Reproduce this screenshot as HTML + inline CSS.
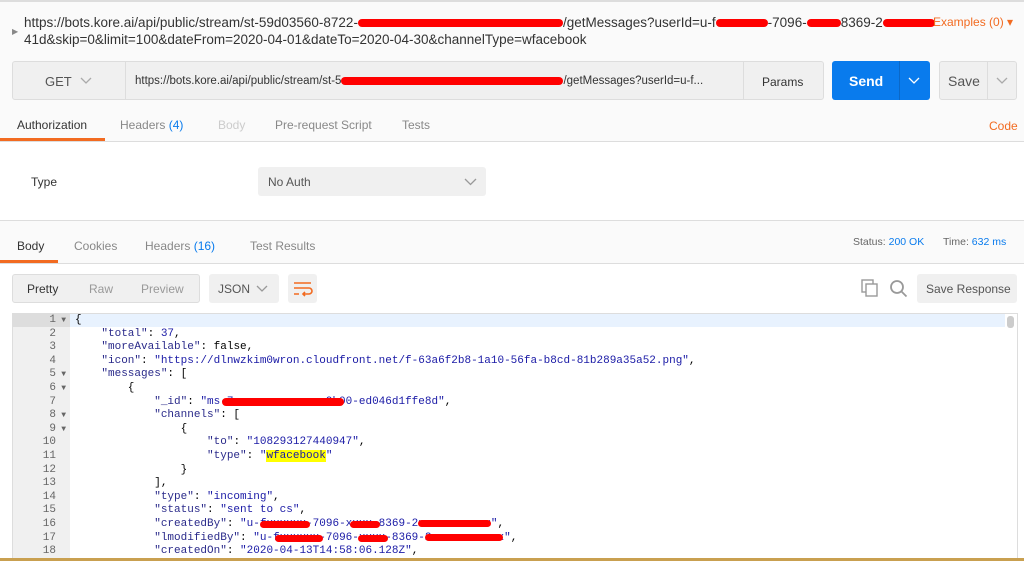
<!DOCTYPE html>
<html><head><meta charset="utf-8"><style>
*{box-sizing:border-box;margin:0;padding:0}
body{width:1024px;height:561px;overflow:hidden;background:#fff;font-family:"Liberation Sans",sans-serif;position:relative;color:#333}
.a{position:absolute}
.red{position:absolute;background:#f00;border-radius:4px;height:7px}
.r{display:inline-block;background:#f00;height:8px;border-radius:4px;vertical-align:middle}
.code{font-family:"Liberation Mono",monospace;font-size:11px;color:#000;line-height:13.6px}
.ln{position:absolute;left:12px;width:44px;text-align:right;color:#666;font-family:"Liberation Mono",monospace;font-size:11px;line-height:13.6px;height:13.6px;white-space:nowrap}
.ln i{font-style:normal;font-size:8px;position:absolute;right:-10px;top:0;color:#666}
.k{color:#2a2a8a}.s{color:#1a1aa6}
.line{position:absolute;left:75px;white-space:pre;height:13.6px}
</style></head><body>
<div class="a" style="left:0;top:0;width:1024px;height:142px;background:#fafafa"></div>
<div class="a" style="left:0;top:0;width:1024px;height:2px;background:#ddd"></div>
<div class="a" style="left:12px;top:27px;font-size:8px;color:#888">▶</div>
<div class="a" style="left:24px;top:14px;font-size:13.5px;line-height:17px;color:#333;white-space:nowrap">https://bots.kore.ai/api/public/stream/st-59d03560-8722-<span class="r" style="width:205px"></span>/getMessages?userId=u-f<span class="r" style="width:52px"></span>-7096-<span class="r" style="width:34px"></span>8369-2<span class="r" style="width:52px"></span><br>41d&amp;skip=0&amp;limit=100&amp;dateFrom=2020-04-01&amp;dateTo=2020-04-30&amp;channelType=wfacebook</div>
<div class="a" style="left:933px;top:15px;font-size:12px;color:#f26b21">Examples (0) ▾</div>
<div class="a" style="left:12px;top:61px;width:812px;height:39px;background:#f0f0f0;border:1px solid #ddd;border-radius:3px"></div>
<div class="a" style="left:125px;top:62px;width:1px;height:37px;background:#ddd"></div>
<div class="a" style="left:743px;top:62px;width:1px;height:37px;background:#ddd"></div>
<div class="a" style="left:45px;top:74px;font-size:13px;color:#555">GET</div>
<svg class="a" style="left:80px;top:77px" width="12" height="8"><path d="M1 1l5 5 5-5" stroke="#aaa" stroke-width="1.3" fill="none"/></svg>
<div class="a" style="left:135px;top:75px;font-size:11.5px;color:#333;white-space:nowrap">https://bots.kore.ai/api/public/stream/st-5<span class="r" style="width:222px"></span>/getMessages?userId=u-f...</div>
<div class="a" style="left:762px;top:75px;font-size:12px;color:#333">Params</div>
<div class="a" style="left:832px;top:61px;width:98px;height:39px;background:#097bed;border-radius:3px"></div>
<div class="a" style="left:899px;top:61px;width:1px;height:39px;background:#0a68c8"></div>
<div class="a" style="left:849px;top:73px;font-size:14px;font-weight:bold;color:#fff">Send</div>
<svg class="a" style="left:908px;top:77px" width="12" height="8"><path d="M1 1l5 5 5-5" stroke="#fff" stroke-width="1.3" fill="none"/></svg>
<div class="a" style="left:939px;top:61px;width:78px;height:39px;background:#f0f0f0;border:1px solid #ddd;border-radius:3px"></div>
<div class="a" style="left:987px;top:62px;width:1px;height:37px;background:#ddd"></div>
<div class="a" style="left:948px;top:73px;font-size:14px;color:#555">Save</div>
<svg class="a" style="left:996px;top:77px" width="12" height="8"><path d="M1 1l5 5 5-5" stroke="#aaa" stroke-width="1.3" fill="none"/></svg>
<div class="a" style="left:17px;top:118px;font-size:12px;color:#333">Authorization</div>
<div class="a" style="left:0;top:138px;width:105px;height:3px;background:#f26b21"></div>
<div class="a" style="left:120px;top:118px;font-size:12px;color:#888">Headers <span style="color:#097bed">(4)</span></div>
<div class="a" style="left:218px;top:118px;font-size:12px;color:#ccc">Body</div>
<div class="a" style="left:275px;top:118px;font-size:12px;color:#888">Pre-request Script</div>
<div class="a" style="left:402px;top:118px;font-size:12px;color:#888">Tests</div>
<div class="a" style="left:989px;top:119px;font-size:12px;color:#f26b21">Code</div>
<div class="a" style="left:0;top:141px;width:1024px;height:1px;background:#ddd"></div>
<div class="a" style="left:31px;top:175px;font-size:12px;color:#333">Type</div>
<div class="a" style="left:258px;top:167px;width:228px;height:29px;background:#f0f0f0;border-radius:3px"></div>
<div class="a" style="left:268px;top:175px;font-size:12px;color:#555">No Auth</div>
<svg class="a" style="left:464px;top:178px" width="13" height="8"><path d="M1 1l5.5 5.5 5.5-5.5" stroke="#999" stroke-width="1.3" fill="none"/></svg>
<div class="a" style="left:0;top:220px;width:1024px;height:1px;background:#ddd"></div>
<div class="a" style="left:0;top:221px;width:1024px;height:42px;background:#fafafa"></div>
<div class="a" style="left:17px;top:239px;font-size:12px;color:#333">Body</div>
<div class="a" style="left:0;top:260px;width:58px;height:3px;background:#f26b21"></div>
<div class="a" style="left:74px;top:239px;font-size:12px;color:#888">Cookies</div>
<div class="a" style="left:145px;top:239px;font-size:12px;color:#888">Headers <span style="color:#097bed">(16)</span></div>
<div class="a" style="left:250px;top:239px;font-size:12px;color:#888">Test Results</div>
<div class="a" style="left:853px;top:236px;font-size:10.5px;color:#666">Status: <span style="color:#097bed">200 OK</span></div>
<div class="a" style="left:943px;top:236px;font-size:10.5px;color:#666">Time: <span style="color:#097bed">632 ms</span></div>
<div class="a" style="left:0;top:263px;width:1024px;height:1px;background:#ddd"></div>
<div class="a" style="left:12px;top:274px;width:188px;height:29px;background:#f0f0f0;border:1px solid #ddd;border-radius:3px"></div>
<div class="a" style="left:27px;top:282px;font-size:12px;color:#333">Pretty</div>
<div class="a" style="left:89px;top:282px;font-size:12px;color:#999">Raw</div>
<div class="a" style="left:141px;top:282px;font-size:12px;color:#999">Preview</div>
<div class="a" style="left:209px;top:274px;width:70px;height:29px;background:#f0f0f0;border-radius:3px"></div>
<div class="a" style="left:218px;top:282px;font-size:12px;color:#555">JSON</div>
<svg class="a" style="left:256px;top:285px" width="12" height="8"><path d="M1 1l5 5 5-5" stroke="#999" stroke-width="1.3" fill="none"/></svg>
<div class="a" style="left:288px;top:274px;width:29px;height:29px;background:#f0f0f0;border-radius:3px"></div>
<svg class="a" style="left:293px;top:280px" width="20" height="17" viewBox="0 0 20 17"><g stroke="#f26b21" stroke-width="1.6" fill="none"><path d="M1 3h17M1 8h15a3 3 0 0 1 0 6h-6M12 12l-2 2 2 2M1 14h5"/></g></svg>
<svg class="a" style="left:861px;top:279px" width="18" height="18"><g stroke="#999" stroke-width="1.4" fill="none"><rect x="1" y="1" width="11" height="12"/><rect x="5" y="5" width="11" height="12" fill="#fff"/></g></svg>
<svg class="a" style="left:889px;top:279px" width="19" height="19"><g stroke="#999" stroke-width="1.8" fill="none"><circle cx="8" cy="8" r="6"/><path d="M12.5 12.5l5 5"/></g></svg>
<div class="a" style="left:917px;top:274px;width:100px;height:29px;background:#f0f0f0;border-radius:3px"></div>
<div class="a" style="left:926px;top:282px;font-size:12px;color:#555">Save Response</div>
<div class="a" style="left:12px;top:313px;width:1006px;height:248px;border:1px solid #ddd;border-bottom:none"></div>
<div class="a" style="left:13px;top:314px;width:57px;height:247px;background:#f0f0f0"></div>
<div class="a" style="left:13px;top:314px;width:57px;height:13px;background:#ddd"></div>
<div class="a" style="left:70px;top:314px;width:935px;height:13px;background:#e8f2fe"></div>
<div class="a" style="left:1007px;top:316px;width:7px;height:12px;background:#ccc;border-radius:3px"></div>
<div class="code">
<div class="ln" style="top:314px">1<i>▼</i></div><div class="ln" style="top:327.6px">2</div><div class="ln" style="top:341.2px">3</div><div class="ln" style="top:354.8px">4</div><div class="ln" style="top:368.4px">5<i>▼</i></div><div class="ln" style="top:382px">6<i>▼</i></div><div class="ln" style="top:395.6px">7</div><div class="ln" style="top:409.2px">8<i>▼</i></div><div class="ln" style="top:422.8px">9<i>▼</i></div><div class="ln" style="top:436.4px">10</div><div class="ln" style="top:450px">11</div><div class="ln" style="top:463.6px">12</div><div class="ln" style="top:477.2px">13</div><div class="ln" style="top:490.8px">14</div><div class="ln" style="top:504.4px">15</div><div class="ln" style="top:518px">16</div><div class="ln" style="top:531.6px">17</div><div class="ln" style="top:545.2px">18</div>
<div class="line" style="top:314px">{</div>
<div class="line" style="top:327.6px">    <span class="k">"total"</span>: <span class="s">37</span>,</div>
<div class="line" style="top:341.2px">    <span class="k">"moreAvailable"</span>: false,</div>
<div class="line" style="top:354.8px">    <span class="k">"icon"</span>: <span class="s">"https://dlnwzkim0wron.cloudfront.net/f-63a6f2b8-1a10-56fa-b8cd-81b289a35a52.png"</span>,</div>
<div class="line" style="top:368.4px">    <span class="k">"messages"</span>: [</div>
<div class="line" style="top:382px">        {</div>
<div class="line" style="top:395.6px">            <span class="k">"_id"</span>: <span class="s">"ms-7xxxxxxxxxxxxxx9b00-ed046d1ffe8d"</span>,</div>
<div class="line" style="top:409.2px">            <span class="k">"channels"</span>: [</div>
<div class="line" style="top:422.8px">                {</div>
<div class="line" style="top:436.4px">                    <span class="k">"to"</span>: <span class="s">"108293127440947"</span>,</div>
<div class="line" style="top:450px">                    <span class="k">"type"</span>: <span class="s">"<span style="background:#ff0;color:#1a1aa6">wfacebook</span>"</span></div>
<div class="line" style="top:463.6px">                }</div>
<div class="line" style="top:477.2px">            ],</div>
<div class="line" style="top:490.8px">            <span class="k">"type"</span>: <span class="s">"incoming"</span>,</div>
<div class="line" style="top:504.4px">            <span class="k">"status"</span>: <span class="s">"sent to cs"</span>,</div>
<div class="line" style="top:518px">            <span class="k">"createdBy"</span>: <span class="s">"u-fxxxxxx-7096-xxxx-8369-2xxxxxxxxxxx"</span>,</div>
<div class="line" style="top:531.6px">            <span class="k">"lmodifiedBy"</span>: <span class="s">"u-fxxxxxx-7096-xxxx-8369-2xxxxxxxxxxx"</span>,</div>
<div class="line" style="top:545.2px">            <span class="k">"createdOn"</span>: <span class="s">"2020-04-13T14:58:06.128Z"</span>,</div>
</div>
<div class="red" style="left:222px;top:398px;width:122px;height:8px"></div>
<div class="red" style="left:260px;top:521px;width:50px"></div>
<div class="red" style="left:350px;top:521px;width:30px"></div>
<div class="red" style="left:418px;top:520px;width:73px"></div>
<div class="red" style="left:275px;top:535px;width:48px"></div>
<div class="red" style="left:358px;top:535px;width:30px"></div>
<div class="red" style="left:425px;top:534px;width:78px"></div>
<div class="a" style="left:0;top:558px;width:1024px;height:3px;background:#c9a050"></div>
</body></html>
